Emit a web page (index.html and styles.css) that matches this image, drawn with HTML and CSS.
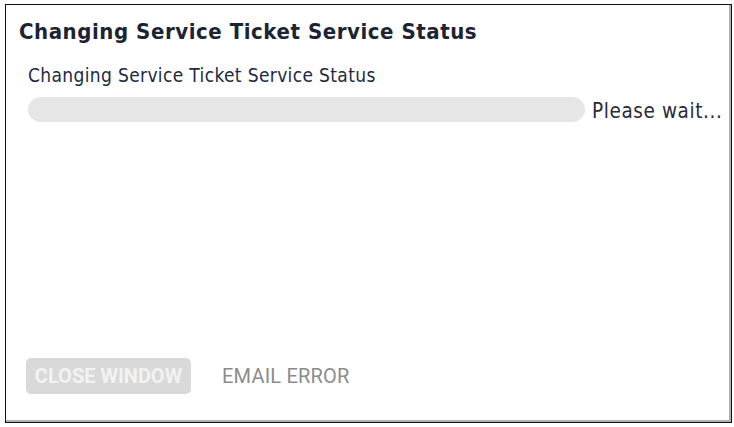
FILE: index.html
```html
<!DOCTYPE html>
<html>
<head>
<meta charset="utf-8">
<link rel="stylesheet" href="styles.css">
</head>
<body>
<div class="window">
  <h1 class="title">Changing Service Ticket Service Status</h1>
  <div class="content">
    <div class="label">Changing Service Ticket Service Status</div>
    <div class="progress-row">
      <div class="progress"></div>
      <span class="wait">Please wait...</span>
    </div>
  </div>
  <div class="actions">
    <button class="btn btn-close">CLOSE WINDOW</button>
    <button class="btn btn-email">EMAIL ERROR</button>
  </div>
</div>
</body>
</html>
```
FILE: styles.css
```css
html, body {
  margin: 0;
  padding: 0;
  background: #ffffff;
}
body {
  padding: 4px 2px 4px 5px;
  height: 427px;
  box-sizing: border-box;
}
.window {
  box-sizing: border-box;
  height: 419px;
  border: 1px solid #111;
  box-shadow: inset -2px -2px 0 #b0b0b0;
  display: flex;
  flex-direction: column;
  padding: 14px 8px 0 13px;
}
.title {
  margin: 0;
  font-family: "DejaVu Sans Condensed", "DejaVu Sans", sans-serif;
  font-weight: bold;
  font-size: 22px;
  letter-spacing: 0.55px;
  color: #1c2333;
  line-height: 26px;
  white-space: nowrap;
}
.content {
  padding-left: 9px;
  margin-top: 20px;
}
.label {
  font-family: "DejaVu Sans Condensed", "DejaVu Sans", sans-serif;
  font-size: 19px;
  letter-spacing: 0.35px;
  color: #1e2a44;
  line-height: 20px;
  white-space: nowrap;
}
.progress-row {
  display: flex;
  align-items: flex-start;
  margin-top: 12px;
}
.progress {
  flex: none;
  width: 557px;
  height: 25px;
  border-radius: 12.5px;
  background: #e6e6e6;
}
.wait {
  margin-left: 7px;
  margin-top: 2px;
  font-family: "DejaVu Sans Condensed", "DejaVu Sans", sans-serif;
  font-size: 20.5px;
  letter-spacing: 0.6px;
  line-height: 24px;
  color: #2a2a3a;
  white-space: nowrap;
}
.actions {
  margin-top: auto;
  margin-bottom: 28px;
  display: flex;
  align-items: center;
  gap: 8px;
  padding-left: 7px;
}
.btn {
  font-family: Roboto, sans-serif;
  font-size: 20px;
  border: none;
  border-radius: 5px;
  height: 36px;
  padding: 0;
  background: transparent;
  text-transform: uppercase;
  white-space: nowrap;
}
.btn-close {
  background: #d9d9d9;
  color: #f2f2f2;
  font-weight: bold;
  letter-spacing: 0px;
  width: 165px;
}
.btn-email {
  color: #8c8c8c;
  margin-left: 23px;
  letter-spacing: 0.2px;
}
```
